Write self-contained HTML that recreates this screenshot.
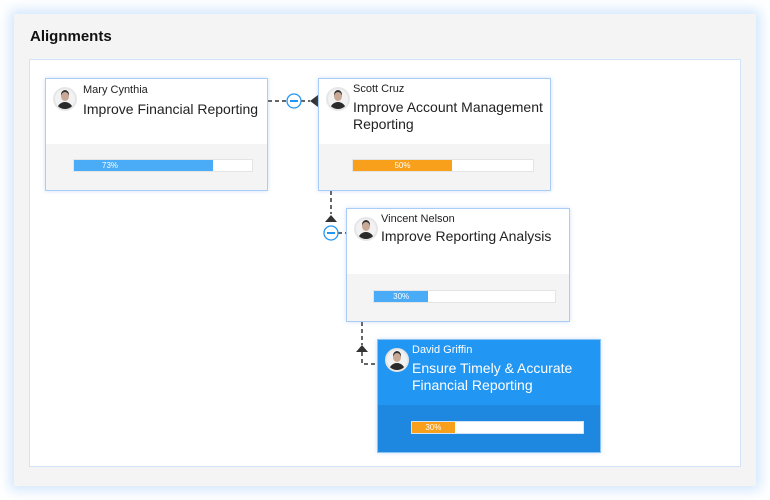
<!DOCTYPE html>
<html><head><style>
*{margin:0;padding:0;box-sizing:border-box}
body{width:770px;height:500px;background:#fff;font-family:"Segoe UI","Liberation Sans",sans-serif;position:relative;overflow:hidden}
.panel{position:absolute;left:14px;top:14px;width:742px;height:472px;background:#f4f4f4;box-shadow:0 0 12px 4px rgba(120,180,250,.35)}
.title{position:absolute;left:16px;top:14px;font-size:15px;font-weight:bold;color:#111}
.inner{position:absolute;left:29px;top:59px;width:712px;height:408px;background:#fff;border:1px solid #d3e4fa}
.card{position:absolute;border:1px solid #a9cdf7;background:#f4f4f4;box-shadow:0 0 4px rgba(100,160,240,.3)}
.hd{position:absolute;left:0;top:0;right:0;background:#fff}
.av{position:absolute;width:24px;height:24px;border-radius:50%;overflow:hidden;background:#f2f2f2;border:2px solid #e6e6e6}
.av:before{content:"";position:absolute;left:6px;top:3px;width:8px;height:9px;border-radius:50%;background:#c9a996;box-shadow:0 -2px 0 #333}
.av:after{content:"";position:absolute;left:2px;top:13px;width:16px;height:12px;border-radius:8px 8px 0 0;background:#2a2a2a}
.nm{position:absolute;font-size:11px;color:#222}
.tt{position:absolute;font-size:14px;color:#222;line-height:17px}
.bar{position:absolute;height:13px;background:#fff;border:1px solid #e4e4e4}
.fill{height:100%;font-size:8px;color:#fff;text-align:center;line-height:11px}
.blue .hd{background:#2196f3}.blue{background:#1e88e0;border-color:#8cc3f5}
.blue .nm,.blue .tt{color:#fff}
</style></head><body>
<div class="panel"><div class="title">Alignments</div></div>
<div class="inner"></div>
<svg style="position:absolute;left:0;top:0" width="770" height="500">
<g stroke="#333" stroke-width="1.5" stroke-dasharray="4,3" fill="none">
<path d="M268 101H287"/><path d="M301 101H310"/>
<path d="M331 191V214"/><path d="M338 233H346"/>
<path d="M362 322V345M362 352V364H377"/>
</g>
<path d="M310 101L318 95V107Z" fill="#333"/>
<path d="M325 222H337L331 215Z" fill="#333"/>
<path d="M356 352H368L362 345Z" fill="#333"/>
<circle cx="294" cy="101" r="7" fill="#fff" stroke="#2196f3" stroke-width="1.3"/><path d="M290 101H298" stroke="#2196f3" stroke-width="2"/>
<circle cx="331" cy="233" r="7" fill="#fff" stroke="#2196f3" stroke-width="1.3"/><path d="M327 233H335" stroke="#2196f3" stroke-width="2"/>
</svg>
<div class="card" style="left:45px;top:78px;width:223px;height:113px"><div class="hd" style="height:65px"></div>
<div class="av" style="left:7px;top:8px"></div><div class="nm" style="left:37px;top:5px">Mary Cynthia</div>
<div class="tt" style="left:37px;top:22px">Improve Financial Reporting</div>
<div class="bar" style="left:27px;top:80px;width:180px"><div class="fill" style="width:78%;background:#4aabf7;text-align:left;padding-left:28px">73%</div></div></div>
<div class="card" style="left:318px;top:78px;width:233px;height:113px"><div class="hd" style="height:65px"></div>
<div class="av" style="left:7px;top:8px"></div><div class="nm" style="left:34px;top:4px">Scott Cruz</div>
<div class="tt" style="left:34px;top:20px">Improve Account Management<br>Reporting</div>
<div class="bar" style="left:33px;top:80px;width:182px"><div class="fill" style="width:55%;background:#f89f1b">50%</div></div></div>
<div class="card" style="left:346px;top:208px;width:224px;height:114px"><div class="hd" style="height:65px"></div>
<div class="av" style="left:7px;top:8px"></div><div class="nm" style="left:34px;top:4px">Vincent Nelson</div>
<div class="tt" style="left:34px;top:19px">Improve Reporting Analysis</div>
<div class="bar" style="left:26px;top:81px;width:183px"><div class="fill" style="width:30%;background:#4aabf7">30%</div></div></div>
<div class="card blue" style="left:377px;top:339px;width:224px;height:114px"><div class="hd" style="height:65px"></div>
<div class="av" style="left:7px;top:8px"></div><div class="nm" style="left:34px;top:4px">David Griffin</div>
<div class="tt" style="left:34px;top:20px">Ensure Timely &amp; Accurate<br>Financial Reporting</div>
<div class="bar" style="left:33px;top:81px;width:173px;border-color:#cfe4fb"><div class="fill" style="width:25%;background:#f89f1b">30%</div></div></div>
</body></html>
